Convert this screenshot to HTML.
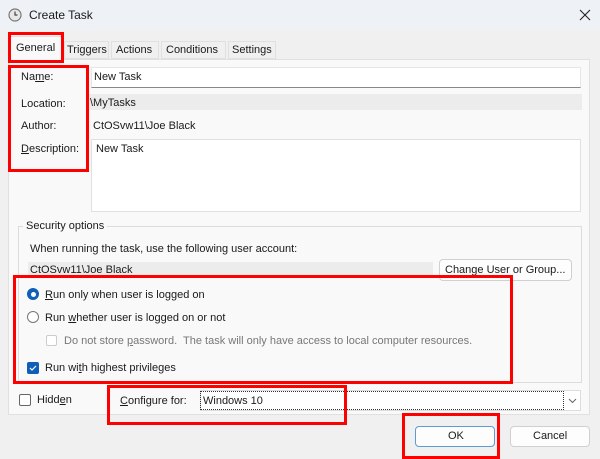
<!DOCTYPE html>
<html><head><style>
*{margin:0;padding:0;box-sizing:border-box}
body{width:600px;height:456px;background:#f0f0f0;font-family:"Liberation Sans",sans-serif;font-size:11px;color:#1a1a1a;position:relative;overflow:hidden}
.a{position:absolute;white-space:nowrap}
.red{position:absolute;border:3px solid #f00}
u{text-decoration:underline}
</style></head><body>
<div class="a" style="left:0;top:0;width:600px;height:30px;background:#eef2f7"></div>
<svg class="a" style="left:8px;top:8px" width="14" height="14" viewBox="0 0 14 14"><circle cx="7" cy="7" r="6" fill="#e8e8e8" stroke="#777" stroke-width="1.2"/><path d="M7 3.5V7h2.5" stroke="#444" stroke-width="1.2" fill="none"/></svg>
<div class="a" style="left:29px;top:8px;font-size:12px">Create Task</div>
<svg class="a" style="left:579px;top:9px" width="12" height="12"><path d="M1 1L11 11M11 1L1 11" stroke="#222" stroke-width="1.1"/></svg>

<div class="a" style="left:8px;top:59px;width:582px;height:356px;background:#f9f9f9;border:1px solid #e0e0e0"></div>
<div class="a" style="left:10px;top:36px;width:53px;height:24px;background:#f9f9f9;border:1px solid #e0e0e0;border-bottom:none"></div>
<div class="a" style="left:16px;top:42px">General</div>
<div class="a" style="left:64px;top:41px;width:45px;height:18px;background:#f0f0f0;border:1px solid #e0e0e0"></div><div class="a" style="left:67px;top:44px">Triggers</div>
<div class="a" style="left:111px;top:41px;width:48px;height:18px;background:#f0f0f0;border:1px solid #e0e0e0"></div><div class="a" style="left:116px;top:44px">Actions</div>
<div class="a" style="left:161px;top:41px;width:65px;height:18px;background:#f0f0f0;border:1px solid #e0e0e0"></div><div class="a" style="left:166px;top:44px">Conditions</div>
<div class="a" style="left:228px;top:41px;width:48px;height:18px;background:#f0f0f0;border:1px solid #e0e0e0"></div><div class="a" style="left:232px;top:44px">Settings</div>
<div class="red" style="left:8px;top:32px;width:56px;height:31px"></div>

<div class="a" style="left:21px;top:71px">Na<u>m</u>e:</div>
<div class="a" style="left:91px;top:67px;width:490px;height:21px;background:#fff;border:1px solid #e6e6e6;border-bottom:1px solid #888"></div>
<div class="a" style="left:94px;top:71px">New Task</div>
<div class="a" style="left:21px;top:98px">Location:</div>
<div class="a" style="left:88px;top:94px;width:494px;height:16px;background:#ececec"></div>
<div class="a" style="left:90px;top:97px">\MyTasks</div>
<div class="a" style="left:21px;top:120px">Author:</div>
<div class="a" style="left:93px;top:120px">CtOSvw11\Joe Black</div>
<div class="a" style="left:21px;top:143px"><u>D</u>escription:</div>
<div class="a" style="left:91px;top:139px;width:490px;height:73px;background:#fff;border:1px solid #e0e0e0"></div>
<div class="a" style="left:96px;top:143px">New Task</div>
<div class="red" style="left:8px;top:65px;width:81px;height:107px"></div>

<div class="a" style="left:18px;top:226px;width:564px;height:157px;border:1px solid #dcdcdc"></div>
<div class="a" style="left:23px;top:220px;background:#f9f9f9;padding:0 3px">Security options</div>
<div class="a" style="left:30px;top:243px">When running the task, use the following user account:</div>
<div class="a" style="left:28px;top:262px;width:405px;height:16px;background:#ececec"></div>
<div class="a" style="left:30px;top:264px">CtOSvw11\Joe Black</div>
<div class="a" style="left:439px;top:259px;width:133px;height:22px;background:#fdfdfd;border:1px solid #d0d0d0;border-radius:4px"></div>
<div class="a" style="left:445px;top:264px">Change User or Group...</div>

<div class="a" style="left:27px;top:288px;width:12px;height:12px;border-radius:50%;background:#0f5fb8"><div style="margin:3.5px;width:5px;height:5px;border-radius:50%;background:#fff"></div></div>
<div class="a" style="left:45px;top:289px"><u>R</u>un only when user is logged on</div>
<div class="a" style="left:27px;top:311px;width:12px;height:12px;border-radius:50%;border:1px solid #777;background:#fff"></div>
<div class="a" style="left:45px;top:312px">Run <u>w</u>hether user is logged on or not</div>
<div class="a" style="left:46px;top:335px;width:11px;height:11px;border:1px solid #ccc;border-radius:2px;background:#fff"></div>
<div class="a" style="left:64px;top:335px;color:#777">Do not store <u>p</u>assword.&nbsp; The task will only have access to local computer resources.</div>
<div class="a" style="left:27px;top:362px;width:12px;height:12px;border-radius:2px;background:#0f5fb8"><svg width="12" height="12" style="display:block"><path d="M3 6l2 2 4-4" stroke="#fff" stroke-width="1.2" fill="none"/></svg></div>
<div class="a" style="left:45px;top:362px">Run wi<u>t</u>h highest privileges</div>
<div class="red" style="left:13px;top:275px;width:500px;height:109px"></div>

<div class="a" style="left:19px;top:394px;width:12px;height:12px;border:1px solid #666;border-radius:2px;background:#fff"></div>
<div class="a" style="left:37px;top:394px">Hidd<u>e</u>n</div>
<div class="a" style="left:120px;top:395px"><u>C</u>onfigure for:</div>
<div class="a" style="left:200px;top:390px;width:381px;height:21px;background:#fff;border:1px solid #ddd"></div>
<div class="a" style="left:200px;top:391px;width:364px;height:19px;border:1px dotted #333"></div>
<div class="a" style="left:203px;top:395px">Windows 10</div>
<svg class="a" style="left:568px;top:398px" width="9" height="6"><path d="M1 1l3.5 3.5L8 1" stroke="#666" fill="none"/></svg>
<div class="red" style="left:107px;top:385px;width:240px;height:40px"></div>

<div class="a" style="left:415px;top:426px;width:80px;height:21px;background:#fdfdfd;border:1px solid #5a9bd8;border-radius:4px"></div>
<div class="a" style="left:448px;top:430px">OK</div>
<div class="a" style="left:510px;top:426px;width:80px;height:21px;background:#fdfdfd;border:1px solid #d0d0d0;border-radius:4px"></div>
<div class="a" style="left:533px;top:430px">Cancel</div>
<div class="red" style="left:402px;top:413px;width:98px;height:46px"></div>
</body></html>
